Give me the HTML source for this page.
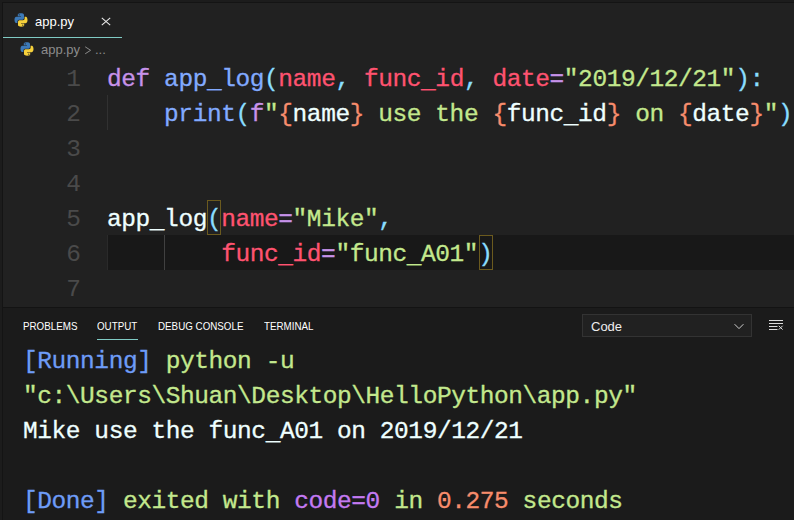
<!DOCTYPE html>
<html><head><meta charset="utf-8">
<style>
*{margin:0;padding:0;box-sizing:border-box}
html,body{width:794px;height:520px;overflow:hidden;background:#212121;position:relative}
.a{position:absolute}
.ui{font-family:"Liberation Sans",sans-serif;white-space:pre}
.code{font-family:"Liberation Mono",monospace;font-size:24.5px;letter-spacing:-0.43px;-webkit-text-stroke:0.3px currentColor;white-space:pre;line-height:35px;color:#eeffff}
.ln{font-family:"Liberation Mono",monospace;font-size:24.5px;color:#4a4a4a;white-space:pre;line-height:35px;text-align:right;width:60px}
.pt{top:318px;font-size:11.5px;line-height:16px;color:#fff;transform:scaleX(0.852);transform-origin:0 0}
.u{position:relative;top:2px}
.kw{color:#c792ea}.fn{color:#82aaff}.pu{color:#89ddff}.pa{color:#ff5370}.st{color:#c3e88d}.br{color:#f78c6c}
</style></head><body>
<!-- top & left strips -->
<div class="a" style="left:0;top:0;width:794px;height:2px;background:#1c1c1c"></div>
<div class="a" style="left:0;top:2px;width:794px;height:1px;background:#141414"></div>
<div class="a" style="left:0;top:0;width:2px;height:520px;background:#1c1c1c"></div>
<div class="a" style="left:2px;top:2px;width:1px;height:518px;background:#141414"></div>

<!-- tab -->
<svg class="a" style="left:14px;top:13px" width="14" height="14" viewBox="0 0 14 14">
<path fill="#3d7ab8" d="M6.9 0.3c-3.3 0-3.1 1.4-3.1 1.4v1.5h3.2v0.5H2.6S0.5 3.4 0.5 6.8s1.8 3.3 1.8 3.3h1.1V8.5s-0.1-1.8 1.8-1.8h3.1s1.7 0 1.7-1.7V2.1S10.3 0.3 6.9 0.3zM5.2 1.2c0.3 0 0.6 0.3 0.6 0.6s-0.3 0.6-0.6 0.6-0.6-0.3-0.6-0.6 0.3-0.6 0.6-0.6z"/>
<path fill="#f5d03b" d="M7.1 13.7c3.3 0 3.1-1.4 3.1-1.4v-1.5H7v-0.5h4.4s2.1 0.2 2.1-3.2-1.8-3.3-1.8-3.3h-1.1v1.6s0.1 1.8-1.8 1.8H5.7s-1.7 0-1.7 1.7v2.9S3.7 13.7 7.1 13.7zM8.8 12.8c-0.3 0-0.6-0.3-0.6-0.6s0.3-0.6 0.6-0.6 0.6 0.3 0.6 0.6-0.3 0.6-0.6 0.6z"/>
</svg>
<div class="a ui" style="left:35px;top:12.5px;font-size:13px;line-height:18px;color:#ffffff">app.py</div>
<svg class="a" style="left:101px;top:16.5px" width="10" height="9" viewBox="0 0 10 9"><path d="M0.8 0.8L9.2 8.2M9.2 0.8L0.8 8.2" stroke="#e8e8e8" stroke-width="1.1"/></svg>
<div class="a" style="left:3px;top:37px;width:119px;height:1px;background:#80cbc4"></div>

<!-- breadcrumb -->
<svg class="a" style="left:20px;top:42px" width="14" height="14" viewBox="0 0 14 14">
<path fill="#3d7ab8" d="M6.9 0.3c-3.3 0-3.1 1.4-3.1 1.4v1.5h3.2v0.5H2.6S0.5 3.4 0.5 6.8s1.8 3.3 1.8 3.3h1.1V8.5s-0.1-1.8 1.8-1.8h3.1s1.7 0 1.7-1.7V2.1S10.3 0.3 6.9 0.3zM5.2 1.2c0.3 0 0.6 0.3 0.6 0.6s-0.3 0.6-0.6 0.6-0.6-0.3-0.6-0.6 0.3-0.6 0.6-0.6z"/>
<path fill="#f5d03b" d="M7.1 13.7c3.3 0 3.1-1.4 3.1-1.4v-1.5H7v-0.5h4.4s2.1 0.2 2.1-3.2-1.8-3.3-1.8-3.3h-1.1v1.6s0.1 1.8-1.8 1.8H5.7s-1.7 0-1.7 1.7v2.9S3.7 13.7 7.1 13.7zM8.8 12.8c-0.3 0-0.6-0.3-0.6-0.6s0.3-0.6 0.6-0.6 0.6 0.3 0.6 0.6-0.3 0.6-0.6 0.6z"/>
</svg>
<div class="a ui" style="left:41px;top:41px;font-size:13px;line-height:18px;color:#8c8c8c">app.py</div>
<svg class="a" style="left:84px;top:46px" width="8" height="9" viewBox="0 0 8 9"><path d="M1.2 0.8L6.6 4.3L1.2 7.8" fill="none" stroke="#8c8c8c" stroke-width="1"/></svg>
<div class="a ui" style="left:95px;top:41px;font-size:13px;line-height:18px;color:#8c8c8c">...</div>

<!-- current line highlight -->
<div class="a" style="left:108px;top:235px;width:686px;height:35px;background:#181818"></div>

<!-- line numbers -->
<div class="a ln" style="left:21px;top:62px">1<br>2<br>3<br>4<br>5<br>6<br>7</div>

<!-- indent guides -->
<div class="a" style="left:107px;top:95px;width:1px;height:35px;background:#313131"></div>
<div class="a" style="left:107px;top:235px;width:1px;height:35px;background:#2a2a2a"></div>
<div class="a" style="left:164px;top:235px;width:1px;height:35px;background:#404040"></div>

<!-- code -->
<div class="a code" style="left:107px;top:62px"><span class="kw">def</span> <span class="fn">app<span class="u">_</span>log</span><span class="pu">(</span><span class="pa">name</span><span class="pu">,</span> <span class="pa">func<span class="u">_</span>id</span><span class="pu">,</span> <span class="pa">date</span><span class="kw">=</span><span class="st">"2019/12/21"</span><span class="pu">):</span>
    <span class="fn">print</span><span class="pu">(</span><span class="kw">f</span><span class="st">"</span><span class="br">{</span>name<span class="br">}</span><span class="st"> use the </span><span class="br">{</span>func<span class="u">_</span>id<span class="br">}</span><span class="st"> on </span><span class="br">{</span>date<span class="br">}</span><span class="st">"</span><span class="pu">)</span>


app<span class="u">_</span>log<span class="pu">(</span><span class="pa">name</span><span class="kw">=</span><span class="st">"Mike"</span><span class="pu">,</span>
        <span class="pa">func<span class="u">_</span>id</span><span class="kw">=</span><span class="st">"func<span class="u">_</span>A01"</span><span class="pu">)</span>
</div>
<!-- bracket match boxes -->
<div class="a" style="left:207px;top:200px;width:14px;height:35px;border:1px solid #6b5a1e"></div>
<div class="a" style="left:479px;top:235px;width:14px;height:35px;border:1px solid #6b5a1e"></div>

<!-- panel -->
<div class="a" style="left:3px;top:307px;width:791px;height:1px;background:#131313"></div>
<div class="a" style="left:3px;top:308px;width:791px;height:212px;background:#1b1b1b"></div>
<div class="a ui pt" style="left:23px">PROBLEMS</div>
<div class="a ui pt" style="left:97px">OUTPUT</div>
<div class="a" style="left:97px;top:339px;width:41px;height:1px;background:#80cbc4"></div>
<div class="a ui pt" style="left:158px">DEBUG CONSOLE</div>
<div class="a ui pt" style="left:264px">TERMINAL</div>

<div class="a" style="left:582px;top:314px;width:170px;height:23px;border:1px solid #333;background:#212121"></div>
<div class="a ui" style="left:591px;top:319px;font-size:13px;line-height:16px;color:#eee">Code</div>
<svg class="a" style="left:733px;top:323px" width="12" height="8" viewBox="0 0 12 8"><path d="M1.6 1.2L6 5.6L10.4 1.2" fill="none" stroke="#d0d0d0" stroke-width="1"/></svg>
<svg class="a" style="left:768px;top:319px" width="16" height="12" viewBox="0 0 16 12">
<path d="M1 1.5H15M1 4.5H15M1 7.5H9.5M1 10.5H9.5" stroke="#ddd" stroke-width="1"/>
<path d="M10.8 6.8L14.6 10.6M14.6 6.8L10.8 10.6" stroke="#ddd" stroke-width="1"/>
</svg>

<!-- output -->
<div class="a code" style="left:23px;top:344px"><span style="color:#6e9cf7">[Running]</span> <span class="st">python -u</span>
<span class="st">"c:\Users\Shuan\Desktop\HelloPython\app.py"</span>
Mike use the func<span class="u">_</span>A01 on 2019/12/21

<span style="color:#6e9cf7">[Done]</span> <span class="st">exited with</span> <span style="color:#c47af2">code=0</span> <span class="st">in</span> <span class="br">0.275</span> <span class="st">seconds</span></div>
</body></html>
